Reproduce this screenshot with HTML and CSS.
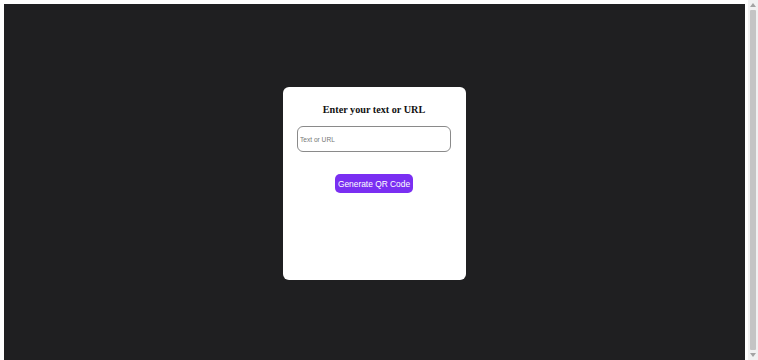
FILE: index.html
```html
<!DOCTYPE html>
<html lang="en">
<head>
<meta charset="utf-8">
<title>QR Code Generator</title>
<link rel="stylesheet" href="styles.css">
</head>
<body>
<div class="page">
  <div class="card">
    <h1 class="title">Enter your text or URL</h1>
    <input class="field" type="text" placeholder="Text or URL">
    <button class="btn" type="button">Generate QR Code</button>
  </div>
</div>
<div class="scrollbar" aria-hidden="true">
  <span class="arrow up"></span>
  <span class="thumb"></span>
  <span class="arrow down"></span>
</div>
</body>
</html>
```

FILE: styles.css
```css
html {
  overflow: hidden;
}
body {
  margin: 4px 13px 4px 4px;
  background: #ffffff;
}
.page {
  height: calc(100vh - 1px);
  background: #1f1f21;
  display: flex;
  align-items: center;
  justify-content: center;
}
.card {
  box-sizing: border-box;
  width: 183px;
  height: 193px;
  background: #ffffff;
  border-radius: 6px;
  padding: 17px 14px 16px 13px;
  display: flex;
  flex-direction: column;
  align-items: center;
}
.title {
  margin: 0;
  font-family: "Liberation Serif", "Times New Roman", serif;
  font-weight: bold;
  font-size: 10.2px;
  line-height: 12px;
  color: #111;
}
.field {
  box-sizing: border-box;
  margin-top: 10px;
  width: 154px;
  height: 26px;
  border: 1px solid #8a8a8a;
  border-radius: 6px;
  padding: 0 2px;
  font-family: "Liberation Sans", Arial, sans-serif;
  font-size: 6.6px;
  outline: none;
}
.field::placeholder {
  color: #777;
}
.btn {
  margin-top: 22px;
  box-sizing: border-box;
  width: 78px;
  height: 19px;
  border: none;
  border-radius: 5px;
  background: #7a2ff2;
  color: #ffffff;
  font-family: "Liberation Sans", Arial, sans-serif;
  font-size: 8.4px;
  padding: 0;
  cursor: pointer;
}
.scrollbar {
  position: fixed;
  top: 0;
  right: 0;
  bottom: 0;
  width: 10px;
  background: #f1f1f1;
  display: flex;
  flex-direction: column;
  align-items: center;
  padding: 3px 0;
  box-sizing: border-box;
  gap: 3px;
}
.thumb {
  flex: 1;
  width: 6px;
  background: #c4c4c4;
  border-radius: 1px;
}
.arrow {
  width: 0;
  height: 0;
  border-left: 3px solid transparent;
  border-right: 3px solid transparent;
}
.arrow.up {
  border-bottom: 4px solid #a3a3a3;
}
.arrow.down {
  border-top: 4px solid #a3a3a3;
}
```
